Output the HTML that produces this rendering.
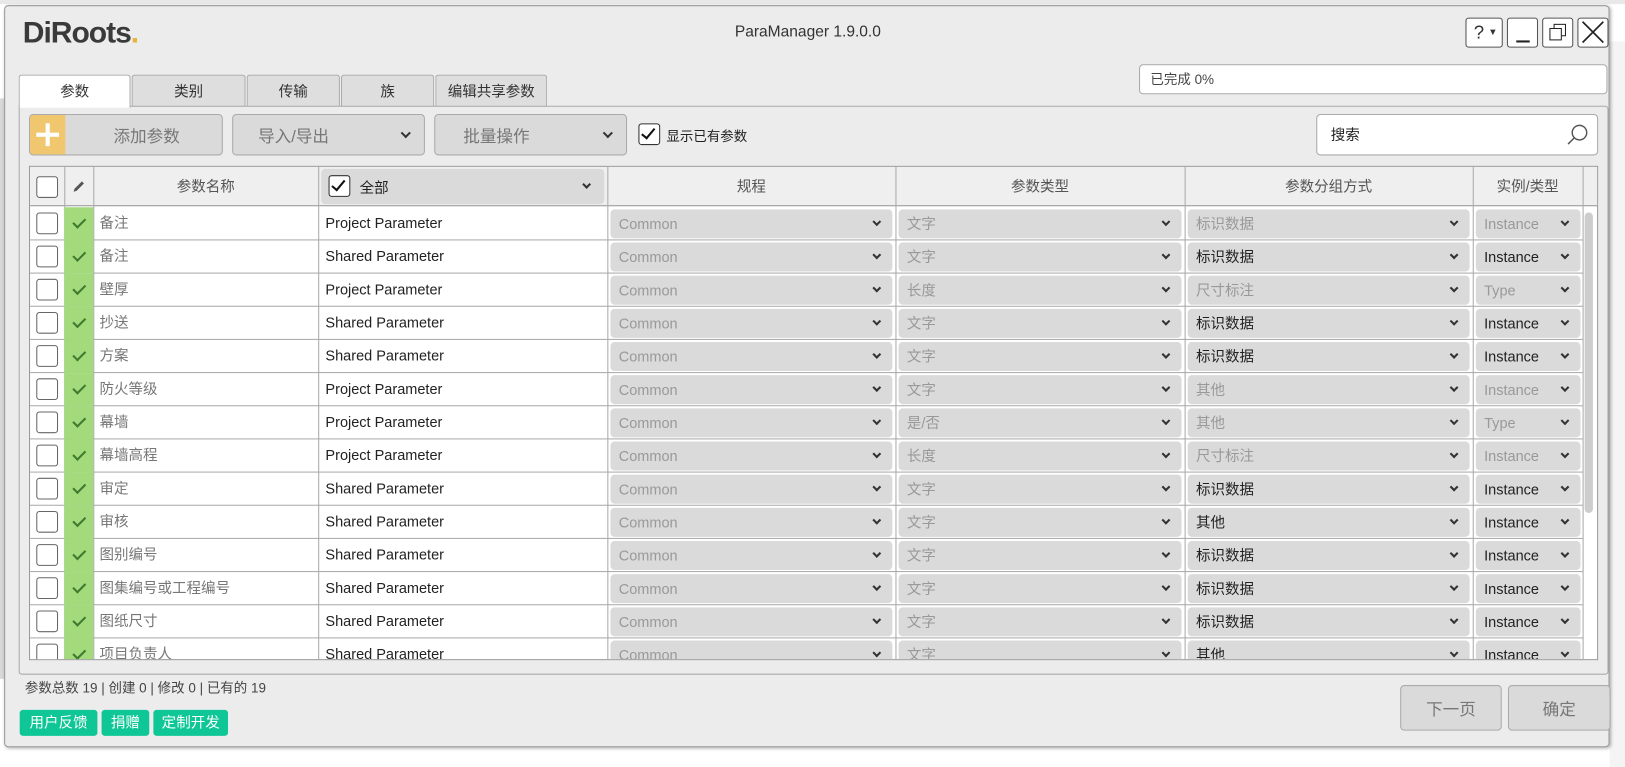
<!DOCTYPE html>
<html><head><meta charset="utf-8">
<style>
*{box-sizing:border-box;margin:0;padding:0}
body{width:1625px;height:750px;background:#fff;font-family:"Liberation Sans","Noto Sans CJK SC",sans-serif;position:relative;overflow:hidden;color:#333}
#wrap{position:absolute;left:0;top:0;width:1568px;height:724px;transform:scale(1.0364);transform-origin:0 0}
.a{position:absolute}
#win{left:4px;top:5px;width:1549px;height:716px;background:#ececec;border:1px solid #999;border-radius:4px;box-shadow:1px 1px 3px rgba(0,0,0,.3)}
.tab{position:absolute;top:66px;height:31px;border:1px solid #aaa;border-bottom:none;background:#dedede;border-radius:3px 3px 0 0;font-size:14px;text-align:center;line-height:30px;color:#333}
.btn{position:absolute;border:1px solid #aaa;border-radius:4px;background:#dadada;font-size:16px;color:#777;display:flex;align-items:center}
.chev{display:inline-block;width:7px;height:7px;border-right:2.5px solid #333;border-bottom:2.5px solid #333;transform:rotate(45deg)}
.cb{position:absolute;width:21px;height:21px;border:1px solid #666;border-radius:3px;background:#fff}
#tbl{left:28px;top:160px;width:1514px;height:477px;border:1px solid #999;background:#fff;overflow:hidden}
.hdr{position:absolute;left:0;top:0;height:38px;width:1514px;background:#efefef;border-bottom:1px solid #999}
.vl{position:absolute;top:0;width:1px;height:500px;background:#aaa}
.hc{position:absolute;top:0;height:38px;line-height:38px;text-align:center;font-size:14px;color:#555}
.row{position:absolute;left:0;width:1498px;height:32px;border-bottom:1px solid #aaa}
.row .g{position:absolute;left:33px;top:0;width:28px;height:32px;background:#a2da7c}
.row .g:after{content:"";position:absolute;left:11px;top:8px;width:5px;height:10px;border-right:2.5px solid #3f7a2f;border-bottom:2.5px solid #3f7a2f;transform:rotate(45deg)}
.row .n{position:absolute;left:67px;top:0;line-height:31px;font-size:14px;color:#777}
.row .t{position:absolute;left:285px;top:0;line-height:31px;font-size:14px;color:#222}
.s{position:absolute;top:2px;height:28px;background:#dadada;border-radius:4px;font-size:14px;line-height:28px;padding-left:8px;color:#999}
.s .chev{position:absolute;right:12px;top:9px;width:6px;height:6px;border-width:2.5px}
.d{color:#222}
</style></head><body>
<div id="wrap">
<div class="a" style="left:0;top:0;width:1568px;height:4px;background:#e8e8e8"></div>
<div class="a" style="left:0;top:95px;width:4px;height:560px;background:#d8d8d8"></div>
<div class="a" style="left:1553px;top:40px;width:15px;height:700px;background:#f4f4f4"></div>
<div id="win" class="a">
  <div class="a" style="left:17px;top:10px;font-size:29px;font-weight:bold;color:#3a3a3a;letter-spacing:-1px">DiRoots<span style="color:#e8b23a">.</span></div>
  <div class="a" style="left:0;width:1549px;top:16px;text-align:center;font-size:15px;color:#333">ParaManager 1.9.0.0</div>
  <div class="a" style="left:1409px;top:11px;width:36px;height:29px;border:1px solid #555;border-radius:3px;background:#fff;font-size:18px;line-height:27px;padding-left:7px">?<span style="font-size:9px;vertical-align:3px;margin-left:4px">▼</span></div>
  <div class="a" style="left:1449px;top:11px;width:30px;height:29px;border:1px solid #555;border-radius:3px;background:#fff"><div class="a" style="left:8px;top:21px;width:13px;height:2px;background:#222"></div></div>
  <div class="a" style="left:1483px;top:11px;width:30px;height:29px;border:1px solid #555;border-radius:3px;background:#fff"><div class="a" style="left:10px;top:5px;width:12px;height:12px;border:1.5px solid #222"></div><div class="a" style="left:6px;top:9px;width:12px;height:12px;border:1.5px solid #222;background:#fff"></div></div>
  <div class="a" style="left:1517px;top:11px;width:30px;height:29px;border:1px solid #555;border-radius:3px;background:#fff"><svg width="30" height="29" style="position:absolute;left:-1px;top:-1px"><path d="M5 4L25 24M25 4L5 24" stroke="#222" stroke-width="1.6"/></svg></div>
  <div class="a" style="left:1094px;top:56px;width:452px;height:29px;border:1px solid #aaa;border-radius:4px;background:#fff;font-size:13px;line-height:27px;padding-left:10px;color:#444">已完成 0%</div>
  <div class="tab" style="left:13px;width:108px;background:#fff;height:32px;z-index:2">参数</div>
  <div class="tab" style="left:122px;width:110px">类别</div>
  <div class="tab" style="left:233px;width:90px">传输</div>
  <div class="tab" style="left:324px;width:90px">族</div>
  <div class="tab" style="left:415px;width:108px">编辑共享参数</div>
  <div class="a" style="left:13px;top:96px;width:1534px;height:549px;border:1px solid #aaa;border-radius:0 3px 3px 3px"></div>
</div>
<div class="btn" style="left:28px;top:110px;width:187px;height:40px;justify-content:center;padding-left:40px;overflow:hidden">添加参数<div class="a" style="left:0;top:0;width:34px;height:40px;background:#f0c66f"><div class="a" style="left:6px;top:17px;width:22px;height:4px;background:#fff"></div><div class="a" style="left:15px;top:8px;width:4px;height:22px;background:#fff"></div></div></div>
<div class="btn" style="left:224px;top:110px;width:186px;height:40px;padding-left:24px">导入/导出<span class="chev a" style="left:163px;top:14px"></span></div>
<div class="btn" style="left:419px;top:110px;width:186px;height:40px;padding-left:27px">批量操作<span class="chev a" style="left:163px;top:14px"></span></div>
<div class="cb" style="left:616px;top:119px;border-color:#333"></div>
<div class="a" style="left:622px;top:121px;width:7px;height:13px;border-right:2px solid #111;border-bottom:2px solid #111;transform:rotate(40deg)"></div>
<div class="a" style="left:643px;top:121px;font-size:13px;color:#222">显示已有参数</div>
<div class="a" style="left:1270px;top:110px;width:272px;height:40px;border:1px solid #aaa;border-radius:4px;background:#fff;font-size:14px;line-height:38px;padding-left:13px;color:#222">搜索
<svg class="a" style="right:8px;top:8px" width="22" height="22"><circle cx="13" cy="9" r="7" stroke="#555" stroke-width="1.4" fill="none"/><path d="M8 14L2 20" stroke="#555" stroke-width="1.4"/></svg></div>

<div id="tbl" class="a">
 <div class="hdr"></div>
 <div class="vl" style="left:33px"></div><div class="vl" style="left:61px"></div><div class="vl" style="left:278px"></div><div class="vl" style="left:557px"></div><div class="vl" style="left:835px"></div><div class="vl" style="left:1114px"></div><div class="vl" style="left:1392px"></div><div class="vl" style="left:1498px"></div>
 <div class="cb" style="left:6px;top:9px"></div>
 <svg class="a" style="left:40px;top:12px" width="14" height="14"><path d="M2 12L3 9L10 2L12 4L5 11Z" fill="#555"/></svg>
 <div class="hc" style="left:61px;width:217px">参数名称</div>
 <div class="a" style="left:281px;top:2px;width:273px;height:34px;background:#dadada;border-radius:4px"><div class="cb" style="left:7px;top:6px;border-color:#333"></div><div class="a" style="left:13px;top:8px;width:7px;height:13px;border-right:2px solid #111;border-bottom:2px solid #111;transform:rotate(40deg)"></div><div class="a" style="left:37px;top:8px;font-size:14px;color:#222">全部</div><span class="chev a" style="left:253px;top:12px;width:6px;height:6px"></span></div>
 <div class="hc" style="left:557px;width:278px">规程</div>
 <div class="hc" style="left:835px;width:279px">参数类型</div>
 <div class="hc" style="left:1114px;width:278px">参数分组方式</div>
 <div class="hc" style="left:1392px;width:106px">实例/类型</div>
 <div class="a" style="left:1500px;top:44px;width:8px;height:290px;background:#cdcdcd;border-radius:4px"></div>

 <div class="row" style="top:39px"><div class="cb" style="left:6px;top:5px"></div><div class="g"></div><div class="n">备注</div><div class="t">Project Parameter</div><div class="s" style="left:560px;width:272px">Common<span class="chev"></span></div><div class="s" style="left:838px;width:273px">文字<span class="chev"></span></div><div class="s" style="left:1117px;width:272px">标识数据<span class="chev"></span></div><div class="s" style="left:1395px;width:101px">Instance<span class="chev"></span></div></div>
 <div class="row" style="top:71px"><div class="cb" style="left:6px;top:5px"></div><div class="g"></div><div class="n">备注</div><div class="t">Shared Parameter</div><div class="s" style="left:560px;width:272px">Common<span class="chev"></span></div><div class="s" style="left:838px;width:273px">文字<span class="chev"></span></div><div class="s d" style="left:1117px;width:272px">标识数据<span class="chev"></span></div><div class="s d" style="left:1395px;width:101px">Instance<span class="chev"></span></div></div>
 <div class="row" style="top:103px"><div class="cb" style="left:6px;top:5px"></div><div class="g"></div><div class="n">壁厚</div><div class="t">Project Parameter</div><div class="s" style="left:560px;width:272px">Common<span class="chev"></span></div><div class="s" style="left:838px;width:273px">长度<span class="chev"></span></div><div class="s" style="left:1117px;width:272px">尺寸标注<span class="chev"></span></div><div class="s" style="left:1395px;width:101px">Type<span class="chev"></span></div></div>
 <div class="row" style="top:135px"><div class="cb" style="left:6px;top:5px"></div><div class="g"></div><div class="n">抄送</div><div class="t">Shared Parameter</div><div class="s" style="left:560px;width:272px">Common<span class="chev"></span></div><div class="s" style="left:838px;width:273px">文字<span class="chev"></span></div><div class="s d" style="left:1117px;width:272px">标识数据<span class="chev"></span></div><div class="s d" style="left:1395px;width:101px">Instance<span class="chev"></span></div></div>
 <div class="row" style="top:167px"><div class="cb" style="left:6px;top:5px"></div><div class="g"></div><div class="n">方案</div><div class="t">Shared Parameter</div><div class="s" style="left:560px;width:272px">Common<span class="chev"></span></div><div class="s" style="left:838px;width:273px">文字<span class="chev"></span></div><div class="s d" style="left:1117px;width:272px">标识数据<span class="chev"></span></div><div class="s d" style="left:1395px;width:101px">Instance<span class="chev"></span></div></div>
 <div class="row" style="top:199px"><div class="cb" style="left:6px;top:5px"></div><div class="g"></div><div class="n">防火等级</div><div class="t">Project Parameter</div><div class="s" style="left:560px;width:272px">Common<span class="chev"></span></div><div class="s" style="left:838px;width:273px">文字<span class="chev"></span></div><div class="s" style="left:1117px;width:272px">其他<span class="chev"></span></div><div class="s" style="left:1395px;width:101px">Instance<span class="chev"></span></div></div>
 <div class="row" style="top:231px"><div class="cb" style="left:6px;top:5px"></div><div class="g"></div><div class="n">幕墙</div><div class="t">Project Parameter</div><div class="s" style="left:560px;width:272px">Common<span class="chev"></span></div><div class="s" style="left:838px;width:273px">是/否<span class="chev"></span></div><div class="s" style="left:1117px;width:272px">其他<span class="chev"></span></div><div class="s" style="left:1395px;width:101px">Type<span class="chev"></span></div></div>
 <div class="row" style="top:263px"><div class="cb" style="left:6px;top:5px"></div><div class="g"></div><div class="n">幕墙高程</div><div class="t">Project Parameter</div><div class="s" style="left:560px;width:272px">Common<span class="chev"></span></div><div class="s" style="left:838px;width:273px">长度<span class="chev"></span></div><div class="s" style="left:1117px;width:272px">尺寸标注<span class="chev"></span></div><div class="s" style="left:1395px;width:101px">Instance<span class="chev"></span></div></div>
 <div class="row" style="top:295px"><div class="cb" style="left:6px;top:5px"></div><div class="g"></div><div class="n">审定</div><div class="t">Shared Parameter</div><div class="s" style="left:560px;width:272px">Common<span class="chev"></span></div><div class="s" style="left:838px;width:273px">文字<span class="chev"></span></div><div class="s d" style="left:1117px;width:272px">标识数据<span class="chev"></span></div><div class="s d" style="left:1395px;width:101px">Instance<span class="chev"></span></div></div>
 <div class="row" style="top:327px"><div class="cb" style="left:6px;top:5px"></div><div class="g"></div><div class="n">审核</div><div class="t">Shared Parameter</div><div class="s" style="left:560px;width:272px">Common<span class="chev"></span></div><div class="s" style="left:838px;width:273px">文字<span class="chev"></span></div><div class="s d" style="left:1117px;width:272px">其他<span class="chev"></span></div><div class="s d" style="left:1395px;width:101px">Instance<span class="chev"></span></div></div>
 <div class="row" style="top:359px"><div class="cb" style="left:6px;top:5px"></div><div class="g"></div><div class="n">图别编号</div><div class="t">Shared Parameter</div><div class="s" style="left:560px;width:272px">Common<span class="chev"></span></div><div class="s" style="left:838px;width:273px">文字<span class="chev"></span></div><div class="s d" style="left:1117px;width:272px">标识数据<span class="chev"></span></div><div class="s d" style="left:1395px;width:101px">Instance<span class="chev"></span></div></div>
 <div class="row" style="top:391px"><div class="cb" style="left:6px;top:5px"></div><div class="g"></div><div class="n">图集编号或工程编号</div><div class="t">Shared Parameter</div><div class="s" style="left:560px;width:272px">Common<span class="chev"></span></div><div class="s" style="left:838px;width:273px">文字<span class="chev"></span></div><div class="s d" style="left:1117px;width:272px">标识数据<span class="chev"></span></div><div class="s d" style="left:1395px;width:101px">Instance<span class="chev"></span></div></div>
 <div class="row" style="top:423px"><div class="cb" style="left:6px;top:5px"></div><div class="g"></div><div class="n">图纸尺寸</div><div class="t">Shared Parameter</div><div class="s" style="left:560px;width:272px">Common<span class="chev"></span></div><div class="s" style="left:838px;width:273px">文字<span class="chev"></span></div><div class="s d" style="left:1117px;width:272px">标识数据<span class="chev"></span></div><div class="s d" style="left:1395px;width:101px">Instance<span class="chev"></span></div></div>
 <div class="row" style="top:455px"><div class="cb" style="left:6px;top:5px"></div><div class="g"></div><div class="n">项目负责人</div><div class="t">Shared Parameter</div><div class="s" style="left:560px;width:272px">Common<span class="chev"></span></div><div class="s" style="left:838px;width:273px">文字<span class="chev"></span></div><div class="s d" style="left:1117px;width:272px">其他<span class="chev"></span></div><div class="s d" style="left:1395px;width:101px">Instance<span class="chev"></span></div></div>
</div>

<div class="a" style="left:24px;top:653px;font-size:13px;color:#444">参数总数 19 | 创建 0 | 修改 0 | 已有的 19</div>
<div class="a" style="left:19px;top:685px;width:75px;height:25px;background:#0fc796;border-radius:3px;color:#fff;font-size:14px;line-height:25px;text-align:center">用户反馈</div>
<div class="a" style="left:98px;top:685px;width:46px;height:25px;background:#0fc796;border-radius:3px;color:#fff;font-size:14px;line-height:25px;text-align:center">捐赠</div>
<div class="a" style="left:148px;top:685px;width:72px;height:25px;background:#0fc796;border-radius:3px;color:#fff;font-size:14px;line-height:25px;text-align:center">定制开发</div>
<div class="btn" style="left:1351px;top:661px;width:98px;height:44px;justify-content:center">下一页</div>
<div class="btn" style="left:1455px;top:661px;width:99px;height:44px;justify-content:center">确定</div>
</div>
</body></html>
